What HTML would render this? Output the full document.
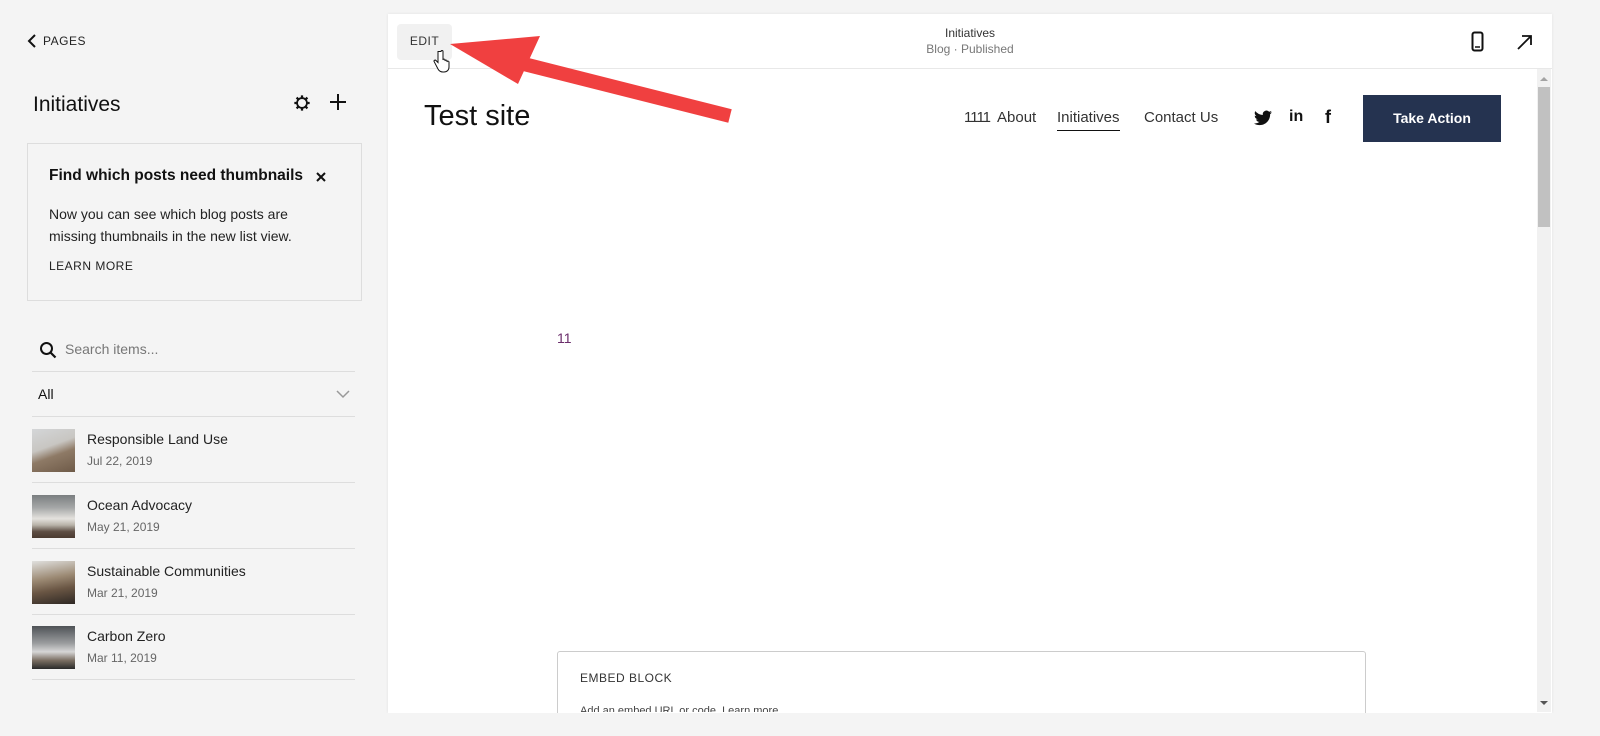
<!DOCTYPE html>
<html><head><meta charset="utf-8"><style>
*{box-sizing:border-box;margin:0;padding:0}
body{width:1600px;height:736px;background:#f4f4f4;font-family:"Liberation Sans",sans-serif;position:relative;overflow:hidden;color:#111}
.a{position:absolute}
.row{position:absolute;left:32px;width:323px;height:66px;border-bottom:1px solid #ddd}
.row .t{position:absolute;left:0;top:12px;width:43px;height:43px}
.row .n{position:absolute;left:55px;top:14px;font-size:14px;color:#222}
.row .d{position:absolute;left:55px;top:37px;font-size:12px;color:#666}
</style></head><body>
<svg class="a" style="left:27px;top:34px" width="10" height="14"><path d="M8 1L2 7l6 6" stroke="#111" stroke-width="2" fill="none"/></svg>
<div class="a" style="left:43px;top:34px;font-size:12px;letter-spacing:.5px;color:#222">PAGES</div>
<div class="a" style="left:33px;top:93px;font-size:21px;color:#111">Initiatives</div>
<svg class="a" style="left:293px;top:94px" width="18" height="18" viewBox="0 0 20 20"><circle cx="10" cy="10" r="5.5" stroke="#111" stroke-width="2" fill="none"/><g stroke="#111" stroke-width="2.5"><path d="M10 1.5v3M10 15.5v3M1.5 10h3M15.5 10h3M4 4l2.2 2.2M13.8 13.8l2.2 2.2M4 16l2.2-2.2M13.8 6.2L16 4"/></g></svg>
<svg class="a" style="left:329px;top:93px" width="18" height="18"><path d="M9 1v16M1 9h16" stroke="#111" stroke-width="2"/></svg>
<div class="a" style="left:27px;top:143px;width:335px;height:158px;border:1px solid #ddd"></div>
<div class="a" style="left:49px;top:167px;font-size:15.5px;font-weight:bold;color:#111">Find which posts need thumbnails</div>
<svg class="a" style="left:316px;top:172px" width="10" height="10"><path d="M1 1l8 8M9 1L1 9" stroke="#111" stroke-width="2"/></svg>
<div class="a" style="left:49px;top:203px;font-size:14px;line-height:22px;color:#222">Now you can see which blog posts are<br>missing thumbnails in the new list view.</div>
<div class="a" style="left:49px;top:259px;font-size:12px;letter-spacing:.5px;color:#222">LEARN MORE</div>
<svg class="a" style="left:39px;top:341px" width="18" height="18"><circle cx="7.5" cy="7.5" r="5.5" stroke="#111" stroke-width="2" fill="none"/><path d="M11.5 11.5l5 5" stroke="#111" stroke-width="2.2"/></svg>
<div class="a" style="left:65px;top:341px;font-size:14px;color:#777">Search items...</div>
<div class="a" style="left:32px;top:371px;width:323px;border-top:1px solid #ddd"></div>
<div class="a" style="left:38px;top:386px;font-size:14px;color:#111">All</div>
<svg class="a" style="left:336px;top:390px" width="14" height="9"><path d="M1 1l6 6 6-6" stroke="#999" stroke-width="1.5" fill="none"/></svg>
<div class="a" style="left:32px;top:416px;width:323px;border-top:1px solid #ddd"></div>
<div class="row" style="top:417px"><div class="t" style="background:linear-gradient(160deg,#d4d6d8 0%,#c8c6c2 40%,#8e7a66 60%,#6e5a48 100%)"></div><div class="n">Responsible Land Use</div><div class="d">Jul 22, 2019</div></div>
<div class="row" style="top:483px"><div class="t" style="background:linear-gradient(180deg,#7a7e80 0%,#a6a8a8 30%,#e4e2de 55%,#b8b2a8 70%,#5e4e44 85%,#4a3a30 100%)"></div><div class="n">Ocean Advocacy</div><div class="d">May 21, 2019</div></div>
<div class="row" style="top:549px"><div class="t" style="background:linear-gradient(170deg,#e0e0de 0%,#9c8a74 40%,#6a5644 65%,#2e2824 100%)"></div><div class="n">Sustainable Communities</div><div class="d">Mar 21, 2019</div></div>
<div class="row" style="top:614px"><div class="t" style="background:linear-gradient(180deg,#4e5256 0%,#9a9c9e 40%,#d6d6d6 60%,#7a6e62 80%,#2a2a2a 100%)"></div><div class="n">Carbon Zero</div><div class="d">Mar 11, 2019</div></div>

<div class="a" style="left:388px;top:14px;width:1164px;height:699px;background:#fff;box-shadow:0 0 3px rgba(0,0,0,.08)"></div>
<div class="a" style="left:388px;top:68px;width:1164px;border-top:1px solid #e8e8e8"></div>
<div class="a" style="left:397px;top:24px;width:55px;height:36px;background:#f1f1f1;border-radius:4px;font-size:12px;letter-spacing:.5px;color:#333;text-align:center;line-height:34px">EDIT</div>
<div class="a" style="left:870px;top:26px;width:200px;text-align:center;font-size:12px;color:#333">Initiatives</div>
<div class="a" style="left:870px;top:42px;width:200px;text-align:center;font-size:12px;color:#777">Blog · Published</div>
<svg class="a" style="left:1471px;top:31px" width="14" height="22"><rect x="1.5" y="1.5" width="10" height="18" rx="2" stroke="#111" stroke-width="2" fill="none"/><path d="M4 16h5" stroke="#111" stroke-width="1.5"/></svg>
<svg class="a" style="left:1516px;top:33px" width="18" height="18"><path d="M2 16L15 3M6 3h9v9" stroke="#111" stroke-width="1.8" fill="none"/></svg>
<div class="a" style="left:1537px;top:69px;width:14px;height:643px;background:#f1f1f1"></div>
<div class="a" style="left:1538px;top:87px;width:12px;height:140px;background:#c1c1c1"></div>
<svg class="a" style="left:1540px;top:76px" width="8" height="6"><path d="M0 5L4 1 8 5z" fill="#a3a3a3"/></svg>
<svg class="a" style="left:1540px;top:700px" width="8" height="6"><path d="M0 1L4 5 8 1z" fill="#555"/></svg>
<div class="a" style="left:424px;top:100px;font-size:29px;color:#111">Test site</div>
<div class="a" style="left:964px;top:109px;font-size:15px;color:#333;letter-spacing:-1px">1111</div>
<div class="a" style="left:997px;top:109px;font-size:15px;color:#333">About</div>
<div class="a" style="left:1057px;top:109px;font-size:15px;color:#333;border-bottom:1px solid #111;padding-bottom:4px">Initiatives</div>
<div class="a" style="left:1144px;top:109px;font-size:15px;color:#333">Contact Us</div>
<svg class="a" style="left:1254px;top:110px" width="18" height="16" viewBox="0 0 24 20"><path d="M24 2.4a10 10 0 0 1-2.8.8A5 5 0 0 0 23.3.5a10 10 0 0 1-3.1 1.2A4.9 4.9 0 0 0 11.8 6 14 14 0 0 1 1.7.9a4.9 4.9 0 0 0 1.5 6.6A4.9 4.9 0 0 1 1 6.9a4.9 4.9 0 0 0 3.9 4.8 5 5 0 0 1-2.2.1 4.9 4.9 0 0 0 4.6 3.4A9.9 9.9 0 0 1 0 17.3 14 14 0 0 0 7.5 19.5c9 0 14-7.5 14-14v-.6A10 10 0 0 0 24 2.4z" fill="#111"/></svg>
<div class="a" style="left:1289px;top:108px;font-size:16px;font-weight:bold;color:#111">in</div>
<div class="a" style="left:1325px;top:107px;font-size:18px;font-weight:bold;color:#111">f</div>
<div class="a" style="left:1363px;top:95px;width:138px;height:47px;background:#253350;color:#fff;font-size:14px;font-weight:bold;text-align:center;line-height:47px">Take Action</div>
<div class="a" style="left:557px;top:330px;font-size:14px;color:#6b2d6b">11</div>
<div class="a" style="left:557px;top:651px;width:809px;height:70px;border:1px solid #ccc;border-radius:3px;background:#fff"></div>
<div class="a" style="left:580px;top:671px;font-size:12px;letter-spacing:.5px;color:#333">EMBED BLOCK</div>
<div class="a" style="left:580px;top:705px;font-size:11px;color:#444;height:7px;overflow:hidden">Add an embed URL or code. Learn more</div>
<div class="a" style="left:0;top:713px;width:1600px;height:23px;background:#f4f4f4"></div>

<svg class="a" style="left:430px;top:34px" width="310" height="90"><path d="M300 82L70 24" stroke="#f04040" stroke-width="14"/><path d="M20 10L110 2 88 50z" fill="#f04040"/></svg>
<svg class="a" style="left:433px;top:50px" width="18" height="24" viewBox="0 0 18 24"><path d="M5 1.5v11l-2-2c-1-1-2.5 0-1.8 1.2L5 19c1 2 2.5 3 5 3h1c3 0 5-2 5-5v-5c0-1-1.5-1.5-2 0v-1c0-1-1.5-1.5-2 0v-1c0-1-1.5-1.5-2 0V1.5c0-1.3-2-1.3-2 0z" fill="#fff" stroke="#111" stroke-width="1"/></svg>
</body></html>
